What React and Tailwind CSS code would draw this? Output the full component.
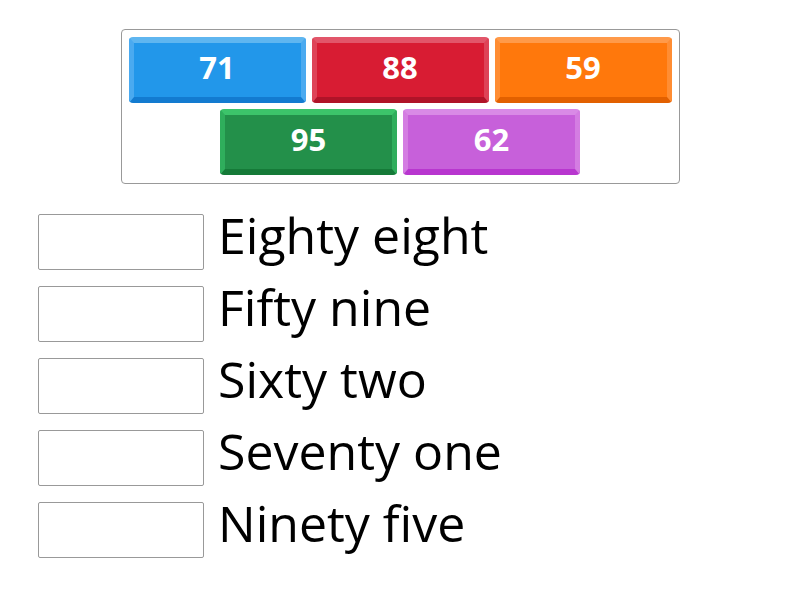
const tiles = [
  [
    { n: "71", bg: "bg-[#2297ea]", top: "border-t-[#5fb6f0]", side: "border-x-[#4aaaf0]", bot: "border-b-[#137bd0]" },
    { n: "88", bg: "bg-[#d81c33]", top: "border-t-[#e2566a]", side: "border-x-[#de4357]", bot: "border-b-[#b01328]" },
    { n: "59", bg: "bg-[#ff780c]", top: "border-t-[#ff9a4a]", side: "border-x-[#ff8d33]", bot: "border-b-[#e26000]" },
  ],
  [
    { n: "95", bg: "bg-[#23904a]", top: "border-t-[#3cc46a]", side: "border-x-[#2fae5c]", bot: "border-b-[#157a38]" },
    { n: "62", bg: "bg-[#c760da]", top: "border-t-[#d98ae6]", side: "border-x-[#d47de2]", bot: "border-b-[#b836cf]" },
  ],
];

const words = ["Eighty eight", "Fifty nine", "Sixty two", "Seventy one", "Ninety five"];

function Tile({ t }) {
  return (
    <div
      className={`w-[177px] h-[66px] rounded-[4px] border-t-[6px] border-x-[5px] border-b-[6px] ${t.bg} ${t.top} ${t.side} ${t.bot} flex items-center justify-center pb-[6px] text-white font-bold text-[31px] leading-none`}
    >
      {t.n}
    </div>
  );
}

export default function App() {
  return (
    <div className="w-[800px] h-[600px] bg-white font-['Open_Sans',sans-serif] text-black">
      <div className="pt-[29px] flex justify-center">
        <div className="w-[559px] border border-[#999] rounded-[4px] px-[7px] pt-[7px] pb-[8px] flex flex-col gap-[6px]">
          {tiles.map((row, i) => (
            <div key={i} className="flex justify-center gap-[6px]">
              {row.map((t) => (
                <Tile key={t.n} t={t} />
              ))}
            </div>
          ))}
        </div>
      </div>
      <div className="mt-[30px] pl-[38px] flex flex-col gap-[16px]">
        {words.map((w) => (
          <div key={w} className="flex items-start gap-[14px]">
            <div className="w-[166px] h-[56px] border border-[#999] rounded-[2px] bg-white" />
            <div className="text-[50px] leading-[42px]">{w}</div>
          </div>
        ))}
      </div>
    </div>
  );
}
